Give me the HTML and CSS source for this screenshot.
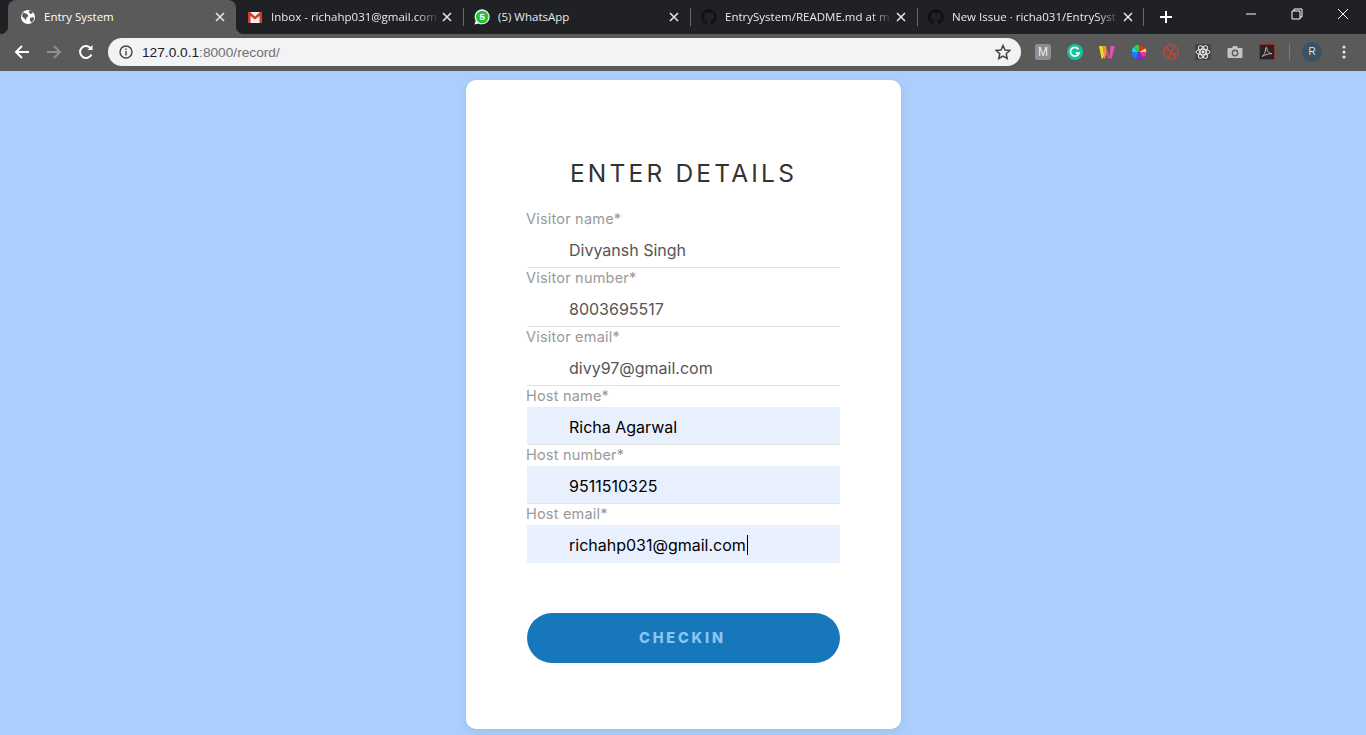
FILE: index.html
```html
<!DOCTYPE html>
<html lang="en">
  <head>
    <meta charset="UTF-8" />
    <meta name="viewport" content="width=device-width, initial-scale=1.0" />
    <title>Entry System</title>
    <link rel="stylesheet" href="styles.css">
  </head>
  <body>
    <!-- browser chrome -->
    <div class="tabstrip">
      <div class="tab active">
        <svg class="favicon" viewBox="0 0 16 16"><circle cx="8" cy="8" r="7" fill="#fff"/><path d="M3 3.500l4 1.500 1.500 2-2 1.500-.5 3-2-2.500-2-1.500zM9 1.500l3 .5 1 2-2.500 1-1.500-1.500zM10 9l3.500-1 .5 2-2 3.500-2-1.500z" fill="#5a5a5a"/></svg>
        <span class="tab-title">Entry System</span>
        <svg class="tab-close" viewBox="0 0 10 10"><path d="M1 1l8 8M9 1l-8 8"/></svg>
      </div>
      <div class="tab">
        <svg class="favicon" viewBox="0 0 16 16"><rect x="1" y="3" width="14" height="11" fill="#f1f1f1"/><path d="M1 14V3h2l5 4.500L13 3h2v11h-2.500V7L8 10.500 3.500 7v7z" fill="#d33b2c"/></svg>
        <span class="tab-title fade">Inbox - richahp031@gmail.com</span>
        <svg class="tab-close" viewBox="0 0 10 10"><path d="M1 1l8 8M9 1l-8 8"/></svg>
      </div>
      <div class="tab sep">
        <svg class="favicon" viewBox="0 0 16 16"><path d="M.5 15.500l1.200-3.800A7.500 7.500 0 1 1 4.500 14.400z" fill="#fff"/><circle cx="8.200" cy="8" r="6.300" fill="#25c13f"/><text class="wa-count" x="8.200" y="11.300" text-anchor="middle">5</text></svg>
        <span class="tab-title">(5) WhatsApp</span>
        <svg class="tab-close" viewBox="0 0 10 10"><path d="M1 1l8 8M9 1l-8 8"/></svg>
      </div>
      <div class="tab sep">
        <svg class="favicon" viewBox="0 0 16 16"><path d="M8 0a8 8 0 0 0-2.500 15.600c.4.100.5-.2.500-.4v-1.400c-2.200.5-2.700-1-2.700-1-.4-.9-.9-1.200-.9-1.200-.7-.5.100-.5.100-.5.800.1 1.200.8 1.200.8.700 1.200 1.900.9 2.300.7.100-.5.300-.9.500-1.100-1.800-.2-3.600-.9-3.600-4 0-.9.300-1.600.8-2.100-.1-.2-.4-1 .1-2.100 0 0 .7-.2 2.200.8a7.600 7.600 0 0 1 4 0c1.500-1 2.200-.8 2.200-.8.400 1.100.2 1.900.1 2.100.5.600.8 1.300.8 2.100 0 3.100-1.900 3.700-3.700 3.900.3.300.6.800.6 1.500v2.200c0 .2.100.5.600.4A8 8 0 0 0 8 0z" fill="#111214"/></svg>
        <span class="tab-title fade">EntrySystem/README.md at m</span>
        <svg class="tab-close" viewBox="0 0 10 10"><path d="M1 1l8 8M9 1l-8 8"/></svg>
      </div>
      <div class="tab sep last">
        <svg class="favicon" viewBox="0 0 16 16"><path d="M8 0a8 8 0 0 0-2.500 15.600c.4.100.5-.2.500-.4v-1.400c-2.200.5-2.700-1-2.700-1-.4-.9-.9-1.200-.9-1.200-.7-.5.100-.5.100-.5.800.1 1.200.8 1.200.8.700 1.200 1.900.9 2.300.7.100-.5.300-.9.500-1.100-1.800-.2-3.600-.9-3.600-4 0-.9.300-1.600.8-2.100-.1-.2-.4-1 .1-2.100 0 0 .7-.2 2.200.8a7.600 7.600 0 0 1 4 0c1.500-1 2.200-.8 2.200-.8.400 1.100.2 1.900.1 2.100.5.600.8 1.300.8 2.100 0 3.100-1.900 3.700-3.700 3.900.3.300.6.800.6 1.500v2.200c0 .2.100.5.600.4A8 8 0 0 0 8 0z" fill="#111214"/></svg>
        <span class="tab-title fade">New Issue · richa031/EntrySyst</span>
        <svg class="tab-close" viewBox="0 0 10 10"><path d="M1 1l8 8M9 1l-8 8"/></svg>
      </div>
      <svg class="new-tab" viewBox="0 0 12 12"><path d="M6 0v12M0 6h12"/></svg>
      <div class="window-btns">
        <svg viewBox="0 0 46 28"><path d="M18 14h10"/></svg>
        <svg viewBox="0 0 46 28"><path d="M18 11h8v8h-8zM20 11V9h8v8h-2"/></svg>
        <svg viewBox="0 0 46 28"><path d="M18 9l10 10M28 9L18 19"/></svg>
      </div>
    </div>

    <div class="toolbar">
      <svg class="nav-icon first" viewBox="0 0 16 16"><path d="M15 8H2M8 2L2 8l6 6" stroke="#fff"/></svg>
      <svg class="nav-icon" viewBox="0 0 16 16"><path d="M1 8h13M8 2l6 6-6 6" stroke="#8f8f8f"/></svg>
      <svg class="nav-icon reload" viewBox="0 0 16 16"><path d="M13.500 10.500A6 6 0 1 1 13 4.500" stroke="#fff"/><path d="M14.500 1v5h-5z" fill="#fff"/></svg>
      <div class="omnibox">
        <svg class="info-icon" viewBox="0 0 14 14"><circle cx="7" cy="7" r="6" fill="none" stroke="#444" stroke-width="1.400"/><path d="M7 6v4.500M7 3.500V5" stroke="#444" stroke-width="1.400"/></svg>
        <span class="url"><b>127.0.0.1</b>:8000/record/</span>
        <svg class="star" viewBox="0 0 16 16"><path d="M8 1.500l2 4.500 4.800.5-3.600 3.200 1 4.800L8 12.100l-4.200 2.400 1-4.800L1.200 6.500 6 6z"/></svg>
      </div>
      <div class="extensions">
        <div class="ext ext-m">M</div>
        <svg class="ext" viewBox="0 0 16 16"><circle cx="8" cy="8" r="8" fill="#15c39a"/><path d="M11.500 5.200A4.400 4.400 0 1 0 12 9.200H8.800" fill="none" stroke="#fff" stroke-width="1.700"/></svg>
        <svg class="ext" viewBox="0 0 16 16"><path d="M0 2h3.500l2 9-1.500 3.500H2.500z" fill="#f6d32d"/><path d="M4 2h3l1 6-2 6.500H5z" fill="#f59331"/><path d="M8 5l2.500 9.500H9L6.500 7z" fill="#e94f8a"/><path d="M11.500 2H16l-3.500 12.500h-2z" fill="#e84fb0"/></svg>
        <svg class="ext" viewBox="0 0 16 16"><circle cx="8" cy="8" r="7.500" fill="#111"/><path d="M8 8V.5A7.500 7.500 0 0 1 14.500 4.300z" fill="#e62a2a"/><path d="M8 8l6.500-3.700A7.500 7.500 0 0 1 15.500 8z" fill="#f5e02c"/><path d="M8 8h7.500a7.500 7.500 0 0 1-3 6z" fill="#ee2fb0"/><path d="M8 8l4.500 6A7.500 7.500 0 0 1 5 14.900z" fill="#7a30d8"/><path d="M8 8l-3 6.900A7.500 7.500 0 0 1 .5 8z" fill="#1c7cf0"/><path d="M8 8H.5a7.500 7.500 0 0 1 2.200-5.300z" fill="#1ed6d6"/><path d="M8 8L2.700 2.700A7.500 7.500 0 0 1 8 .5z" fill="#36d13a"/></svg>
        <svg class="ext" viewBox="0 0 16 16"><g fill="none" stroke="#d0442e" stroke-width="1.300"><circle cx="8" cy="8" r="7.200"/><path d="M3 3l10 10M5 13c3-1 2-4 3.500-6S11 3 11 3M10 9c1 1 2 1 3 1"/></g></svg>
        <svg class="ext ext-dark" viewBox="0 0 16 16"><g fill="none" stroke="#eee" stroke-width="1"><ellipse cx="8" cy="8" rx="7" ry="2.800"/><ellipse cx="8" cy="8" rx="7" ry="2.800" transform="rotate(60 8 8)"/><ellipse cx="8" cy="8" rx="7" ry="2.800" transform="rotate(120 8 8)"/></g><circle cx="8" cy="8" r="1.400" fill="#eee"/></svg>
        <svg class="ext" viewBox="0 0 16 16"><path d="M1.500 4H5l1-2h4l1 2h3.500a1 1 0 0 1 1 1v8a1 1 0 0 1-1 1h-13a1 1 0 0 1-1-1V5a1 1 0 0 1 1-1z" fill="#c4c4c4"/><circle cx="8" cy="9" r="3.400" fill="#5a5a5a"/><circle cx="8" cy="9" r="2" fill="#c4c4c4"/></svg>
        <svg class="ext" viewBox="0 0 16 16"><rect x=".5" y=".5" width="15" height="15" fill="#2b2323" stroke="#8f2f22"/><path d="M3 12.500c2-1 3.500-4 3.800-8.500.1-1 1-.9 1 .2 0 2.500 2 5.500 5 5.500-3 0-6 .8-9.800 2.800z" fill="none" stroke="#c9c0c0" stroke-width=".9"/></svg>
      </div>
      <div class="toolbar-divider"></div>
      <div class="avatar">R</div>
      <svg class="menu-dots" viewBox="0 0 4 14"><circle cx="2" cy="2" r="1.500"/><circle cx="2" cy="7" r="1.500"/><circle cx="2" cy="12" r="1.500"/></svg>
    </div>

    <!-- page -->
    <div class="page">
      <form class="card">
        <h1>ENTER DETAILS</h1>

        <div class="field">
          <label>Visitor name*</label>
          <div class="input">Divyansh Singh</div>
        </div>
        <div class="field">
          <label>Visitor number*</label>
          <div class="input">8003695517</div>
        </div>
        <div class="field">
          <label>Visitor email*</label>
          <div class="input">divy97@gmail.com</div>
        </div>
        <div class="field">
          <label>Host name*</label>
          <div class="input autofill">Richa Agarwal</div>
        </div>
        <div class="field">
          <label>Host number*</label>
          <div class="input autofill">9511510325</div>
        </div>
        <div class="field">
          <label>Host email*</label>
          <div class="input autofill no-line">richahp031@gmail.com<span class="caret"></span></div>
        </div>

        <button type="submit" class="btn">CHECKIN</button>
      </form>
    </div>
  </body>
</html>
```

FILE: styles.css
```css
html,
body {
  height: 100%;
}
body {
  margin: 0;
  display: flex;
  flex-direction: column;
  overflow: hidden;
  background-color: #abcefc;
  font-family: "Open Sans", sans-serif;
}

/* tabs */
.tabstrip {
  display: flex;
  align-items: flex-start;
  height: 34px;
  padding-left: 8px;
  background-color: #202124;
  flex-shrink: 0;
}
.tab {
  display: flex;
  align-items: center;
  box-sizing: border-box;
  width: 227px;
  height: 34px;
  padding: 0 11px;
  position: relative;
  color: #e8eaed;
  font-family: "Open Sans", sans-serif;
  font-size: 11.500px;
}
.tab.active {
  width: 228px;
  padding-left: 12px;
  background-color: #5a5a5a;
  border-radius: 8px 8px 0 0;
  color: #fff;
}
/* the flared bottom corners of the active tab */
.tab.active::before,
.tab.active::after {
  content: "";
  position: absolute;
  bottom: 0;
  width: 8px;
  height: 8px;
}
.tab.active::before {
  left: -8px;
  background: radial-gradient(circle at 0 0, #202124 8px, #5a5a5a 8.500px);
}
.tab.active::after {
  right: -8px;
  background: radial-gradient(circle at 100% 0, #202124 8px, #5a5a5a 8.500px);
}
.sep::before {
  content: "";
  position: absolute;
  left: 0;
  top: 8px;
  height: 18px;
  width: 1px;
  background-color: #6a6b6e;
}
.last::after {
  content: "";
  position: absolute;
  right: 0;
  top: 8px;
  height: 18px;
  width: 1px;
  background-color: #6a6b6e;
}
.favicon {
  width: 16px;
  height: 16px;
  margin-right: 8px;
  flex-shrink: 0;
}
.wa-count {
  font-family: "Liberation Sans", sans-serif;
  font-size: 9.500px;
  font-weight: 700;
  fill: #fff;
}
.tab-title {
  flex: 1;
  overflow: hidden;
  padding-bottom: 2px;
  white-space: nowrap;
}
.fade {
  -webkit-mask-image: linear-gradient(to right, #000 calc(100% - 22px), transparent);
  mask-image: linear-gradient(to right, #000 calc(100% - 22px), transparent);
}
.tab-close {
  width: 10px;
  height: 10px;
  margin-left: 3px;
  flex-shrink: 0;
  fill: none;
  stroke: #e8eaed;
  stroke-width: 1.500;
}
.new-tab {
  width: 12px;
  height: 12px;
  margin: 11px 0 0 16px;
  fill: none;
  stroke: #fff;
  stroke-width: 2;
}
.window-btns {
  display: flex;
  margin-left: auto;
}
.window-btns svg {
  width: 46px;
  height: 28px;
  fill: none;
  stroke: #fff;
  stroke-width: 1;
}

/* toolbar */
.toolbar {
  display: flex;
  align-items: center;
  box-sizing: border-box;
  height: 37px;
  padding-bottom: 1px;
  background-color: #5a5a5a;
  flex-shrink: 0;
}
.nav-icon {
  width: 16px;
  height: 16px;
  margin-right: 16px;
  fill: none;
  stroke-width: 2;
}
.nav-icon.first {
  margin-left: 14px;
}
.nav-icon.reload {
  margin-right: 14px;
}
.omnibox {
  display: flex;
  align-items: center;
  box-sizing: border-box;
  width: 913px;
  height: 28px;
  padding: 0 10px 0 11px;
  background-color: #f1f3f4;
  border-radius: 14px;
}
.info-icon {
  width: 14px;
  height: 14px;
  margin-right: 9px;
}
.url {
  flex: 1;
  color: #6f7072;
  font-family: "Liberation Sans", sans-serif;
  font-size: 13.700px;
}
.url b {
  font-weight: 400;
  color: #202124;
}
.star {
  width: 16px;
  height: 16px;
  fill: none;
  stroke: #444;
  stroke-width: 1.500;
}
.extensions {
  display: flex;
  gap: 16px;
  margin-left: 14px;
}
.ext {
  width: 16px;
  height: 16px;
}
.ext-m {
  background-color: #8e8e8e;
  border-radius: 2px;
  color: #eee;
  font-family: "Liberation Sans", sans-serif;
  font-size: 12px;
  line-height: 16px;
  text-align: center;
}
.ext-dark {
  background-color: #444;
}
.toolbar-divider {
  width: 1px;
  height: 16px;
  margin-left: 14px;
  background-color: #7b7b7b;
}
.avatar {
  width: 20px;
  height: 20px;
  margin-left: 12px;
  background-color: #3c5161;
  border-radius: 50%;
  color: #dfe6ea;
  font-family: "Liberation Sans", sans-serif;
  font-size: 10px;
  line-height: 20px;
  text-align: center;
}
.menu-dots {
  width: 4px;
  height: 14px;
  margin-left: 20px;
  fill: #e8eaed;
}

/* form card */
.page {
  flex: 1;
  display: flex;
  justify-content: center;
  padding-top: 9px;
  padding-left: 1px;
}
.card {
  box-sizing: border-box;
  width: 435px;
  height: 649px;
  padding: 78px 61px 0;
  background-color: white;
  border-radius: 10px;
  box-shadow: 0 2px 8px rgba(0, 0, 0, 0.08);
}
h1 {
  margin: 0 0 21px;
  color: #333;
  font-family: "Inter", sans-serif;
  font-size: 24.500px;
  font-weight: 400;
  line-height: 30px;
  letter-spacing: 3.200px;
  text-align: center;
}
.field {
  height: 59px;
}
label {
  display: block;
  height: 22px;
  margin-left: -1px;
  color: #999;
  font-family: "Inter", sans-serif;
  font-size: 14.500px;
  line-height: 20px;
  letter-spacing: 0.200px;
}
.input {
  box-sizing: border-box;
  height: 38px;
  margin-top: -1px;
  padding: 0 0 0 42px;
  border-bottom: 1px solid #e4e4e4;
  color: #555;
  font-family: "Inter", sans-serif;
  font-size: 16px;
  line-height: 40px;
}
.autofill {
  background-color: #e8f0fe;
  color: #000;
}
.no-line {
  border-bottom: 0;
}
.caret {
  display: inline-block;
  width: 1px;
  height: 20px;
  margin-left: 1px;
  background-color: #000;
  vertical-align: -4px;
}
.btn {
  display: block;
  width: 100%;
  height: 50px;
  margin-top: 50px;
  padding: 0 2px 2px 0;
  border: 0;
  border-radius: 25px;
  background-color: #1678bb;
  color: #8cc4f2;
  font-family: "Inter", sans-serif;
  font-size: 14.500px;
  font-weight: 800;
  letter-spacing: 2.800px;
}
```
